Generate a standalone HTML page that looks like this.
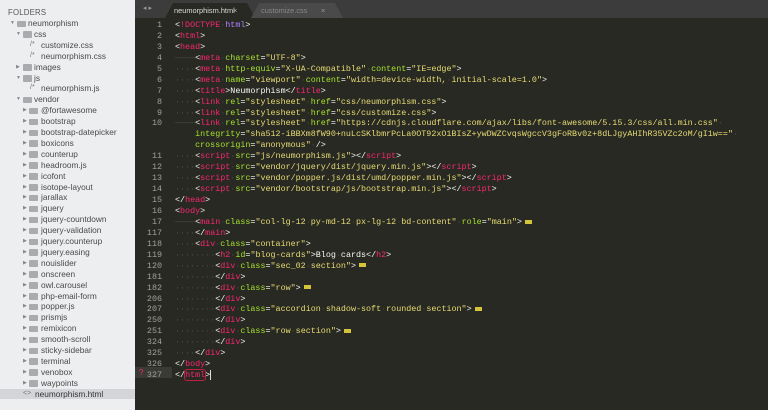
<!DOCTYPE html>
<html><head><style>
*{margin:0;padding:0;box-sizing:border-box}
body{width:768px;height:410px;overflow:hidden;background:#282923;position:relative;font-family:"Liberation Sans",sans-serif}
#side{position:absolute;left:0;top:0;width:135px;height:410px;background:#eceef0;color:#4a4a4a;font-size:8.3px}
#side .h{position:absolute;left:8px;top:8px;font-size:7.8px;color:#555;letter-spacing:.2px}
.r{position:absolute;height:10.9px;line-height:10.9px;white-space:nowrap;left:0;width:135px}
.r .a{position:absolute;font-size:5px;color:#888}
.r .f{position:absolute;top:2.5px;width:9px;height:6.5px;background:#a9abae;border-radius:1px}
.r .t{position:absolute}
.r .c{position:absolute;color:#777;font-size:7px}
#tabs{position:absolute;left:135px;top:0;width:633px;height:18px;background:#3c3c3c}
.tab{position:absolute;top:3px;height:15px;font-size:7.4px;line-height:15px}
#ed{position:absolute;left:135px;top:18px;width:633px;height:392px;background:#282923}
.ln{position:absolute;left:0;width:27px;text-align:right;color:#a0a19b;font-family:"Liberation Mono",monospace;font-size:8.4px;height:10.94px;line-height:10.94px}
.cl{position:absolute;left:40px;white-space:pre;font-family:"Liberation Mono",monospace;font-size:8.4px;height:10.94px;line-height:10.94px;color:#f8f8f2}
.g{color:#4d4e48}.p{color:#f92672}.v{color:#ae81ff}.at{color:#a6e22e}.s{color:#e6db74}
.fm{display:inline-block;width:7px;height:4px;background:#d4c43a;vertical-align:middle;margin-left:3px}
</style></head><body>
<div id="side">
<div class="h">FOLDERS</div>
<div class="r" style="top:18px"><span class="a" style="left:10px">▼</span><span class="f" style="left:17px"></span><span class="t" style="left:28px">neumorphism</span></div>
<div class="r" style="top:28.9px"><span class="a" style="left:16px">▼</span><span class="f" style="left:23px"></span><span class="t" style="left:34px">css</span></div>
<div class="r" style="top:39.8px"><span class="c" style="left:30px">/*</span><span class="t" style="left:41px">customize.css</span></div>
<div class="r" style="top:50.7px"><span class="c" style="left:30px">/*</span><span class="t" style="left:41px">neumorphism.css</span></div>
<div class="r" style="top:61.6px"><span class="a" style="left:16px">▶</span><span class="f" style="left:23px"></span><span class="t" style="left:34px">images</span></div>
<div class="r" style="top:72.5px"><span class="a" style="left:16px">▼</span><span class="f" style="left:23px"></span><span class="t" style="left:34px">js</span></div>
<div class="r" style="top:83.4px"><span class="c" style="left:30px">/*</span><span class="t" style="left:41px">neumorphism.js</span></div>
<div class="r" style="top:94.3px"><span class="a" style="left:16px">▼</span><span class="f" style="left:23px"></span><span class="t" style="left:34px">vendor</span></div>
<div class="r" style="top:105.2px"><span class="a" style="left:23px">▶</span><span class="f" style="left:29px"></span><span class="t" style="left:41px">@fortawesome</span></div>
<div class="r" style="top:116.1px"><span class="a" style="left:23px">▶</span><span class="f" style="left:29px"></span><span class="t" style="left:41px">bootstrap</span></div>
<div class="r" style="top:127px"><span class="a" style="left:23px">▶</span><span class="f" style="left:29px"></span><span class="t" style="left:41px">bootstrap-datepicker</span></div>
<div class="r" style="top:137.9px"><span class="a" style="left:23px">▶</span><span class="f" style="left:29px"></span><span class="t" style="left:41px">boxicons</span></div>
<div class="r" style="top:148.8px"><span class="a" style="left:23px">▶</span><span class="f" style="left:29px"></span><span class="t" style="left:41px">counterup</span></div>
<div class="r" style="top:159.7px"><span class="a" style="left:23px">▶</span><span class="f" style="left:29px"></span><span class="t" style="left:41px">headroom.js</span></div>
<div class="r" style="top:170.6px"><span class="a" style="left:23px">▶</span><span class="f" style="left:29px"></span><span class="t" style="left:41px">icofont</span></div>
<div class="r" style="top:181.5px"><span class="a" style="left:23px">▶</span><span class="f" style="left:29px"></span><span class="t" style="left:41px">isotope-layout</span></div>
<div class="r" style="top:192.4px"><span class="a" style="left:23px">▶</span><span class="f" style="left:29px"></span><span class="t" style="left:41px">jarallax</span></div>
<div class="r" style="top:203.3px"><span class="a" style="left:23px">▶</span><span class="f" style="left:29px"></span><span class="t" style="left:41px">jquery</span></div>
<div class="r" style="top:214.2px"><span class="a" style="left:23px">▶</span><span class="f" style="left:29px"></span><span class="t" style="left:41px">jquery-countdown</span></div>
<div class="r" style="top:225.1px"><span class="a" style="left:23px">▶</span><span class="f" style="left:29px"></span><span class="t" style="left:41px">jquery-validation</span></div>
<div class="r" style="top:236px"><span class="a" style="left:23px">▶</span><span class="f" style="left:29px"></span><span class="t" style="left:41px">jquery.counterup</span></div>
<div class="r" style="top:246.9px"><span class="a" style="left:23px">▶</span><span class="f" style="left:29px"></span><span class="t" style="left:41px">jquery.easing</span></div>
<div class="r" style="top:257.8px"><span class="a" style="left:23px">▶</span><span class="f" style="left:29px"></span><span class="t" style="left:41px">nouislider</span></div>
<div class="r" style="top:268.7px"><span class="a" style="left:23px">▶</span><span class="f" style="left:29px"></span><span class="t" style="left:41px">onscreen</span></div>
<div class="r" style="top:279.6px"><span class="a" style="left:23px">▶</span><span class="f" style="left:29px"></span><span class="t" style="left:41px">owl.carousel</span></div>
<div class="r" style="top:290.5px"><span class="a" style="left:23px">▶</span><span class="f" style="left:29px"></span><span class="t" style="left:41px">php-email-form</span></div>
<div class="r" style="top:301.4px"><span class="a" style="left:23px">▶</span><span class="f" style="left:29px"></span><span class="t" style="left:41px">popper.js</span></div>
<div class="r" style="top:312.3px"><span class="a" style="left:23px">▶</span><span class="f" style="left:29px"></span><span class="t" style="left:41px">prismjs</span></div>
<div class="r" style="top:323.2px"><span class="a" style="left:23px">▶</span><span class="f" style="left:29px"></span><span class="t" style="left:41px">remixicon</span></div>
<div class="r" style="top:334.1px"><span class="a" style="left:23px">▶</span><span class="f" style="left:29px"></span><span class="t" style="left:41px">smooth-scroll</span></div>
<div class="r" style="top:345px"><span class="a" style="left:23px">▶</span><span class="f" style="left:29px"></span><span class="t" style="left:41px">sticky-sidebar</span></div>
<div class="r" style="top:355.9px"><span class="a" style="left:23px">▶</span><span class="f" style="left:29px"></span><span class="t" style="left:41px">terminal</span></div>
<div class="r" style="top:366.8px"><span class="a" style="left:23px">▶</span><span class="f" style="left:29px"></span><span class="t" style="left:41px">venobox</span></div>
<div class="r" style="top:377.7px"><span class="a" style="left:23px">▶</span><span class="f" style="left:29px"></span><span class="t" style="left:41px">waypoints</span></div>
<div class="r" style="top:388.6px;background:#d3d5d9"><span class="c" style="left:23px">&lt;&gt;</span><span class="t" style="left:35px;color:#333">neumorphism.html</span></div>
</div>
<div id="tabs">
<span style="position:absolute;left:8px;top:4px;color:#999;font-size:7px">◂ ▸</span>
<div class="tab" style="left:30px;width:90px;background:#282923;color:#ddd;clip-path:polygon(8px 0,82px 0,90px 100%,0 100%)"><span style="position:absolute;left:9px">neumorphism.html</span><span style="position:absolute;left:68px;color:#aaa">×</span></div>
<div class="tab" style="left:116px;width:92px;background:#4a4a4a;color:#888;clip-path:polygon(8px 0,84px 0,92px 100%,0 100%)"><span style="position:absolute;left:10px">customize.css</span><span style="position:absolute;left:70px;color:#999">×</span></div>
</div>
<div id="ed">
<div style="position:absolute;left:0;top:349px;width:37px;height:11px;background:#3a3b35"></div>
<span style="position:absolute;left:4px;top:349px;color:#f92672;font-size:8px;line-height:11px">?</span>
<div id="code"></div>
</div>
<script>
const L=[
["1",'&lt;<span class="p">!DOCTYPE</span><span class="g">·</span><span class="v">html</span>&gt;'],
["2",'&lt;<span class="p">html</span>&gt;'],
["3",'&lt;<span class="p">head</span>&gt;'],
["4",'<span class="g">————</span>&lt;<span class="p">meta</span><span class="g">·</span><span class="at">charset</span>=<span class="s">"UTF-8"</span>&gt;'],
["5",'<span class="g">····</span>&lt;<span class="p">meta</span><span class="g">·</span><span class="at">http-equiv</span>=<span class="s">"X-UA-Compatible"</span><span class="g">·</span><span class="at">content</span>=<span class="s">"IE=edge"</span>&gt;'],
["6",'<span class="g">····</span>&lt;<span class="p">meta</span><span class="g">·</span><span class="at">name</span>=<span class="s">"viewport"</span><span class="g">·</span><span class="at">content</span>=<span class="s">"width=device-width,<span class="g">·</span>initial-scale=1.0"</span>&gt;'],
["7",'<span class="g">····</span>&lt;<span class="p">title</span>&gt;Neumorphism&lt;/<span class="p">title</span>&gt;'],
["8",'<span class="g">····</span>&lt;<span class="p">link</span><span class="g">·</span><span class="at">rel</span>=<span class="s">"stylesheet"</span><span class="g">·</span><span class="at">href</span>=<span class="s">"css/neumorphism.css"</span>&gt;'],
["9",'<span class="g">····</span>&lt;<span class="p">link</span><span class="g">·</span><span class="at">rel</span>=<span class="s">"stylesheet"</span><span class="g">·</span><span class="at">href</span>=<span class="s">"css/customize.css"</span>&gt;'],
["10",'<span class="g">————</span>&lt;<span class="p">link</span><span class="g">·</span><span class="at">rel</span>=<span class="s">"stylesheet"</span><span class="g">·</span><span class="at">href</span>=<span class="s">"https://cdnjs.cloudflare.com/ajax/libs/font-awesome/5.15.3/css/all.min.css"</span><span class="g">·</span>'],
["",'<span class="g">    </span><span class="at">integrity</span>=<span class="s">"sha512-iBBXm8fW90+nuLcSKlbmrPcLa0OT92xO1BIsZ+ywDWZCvqsWgccV3gFoRBv0z+8dLJgyAHIhR35VZc2oM/gI1w=="</span><span class="g">·</span>'],
["",'<span class="g">    </span><span class="at">crossorigin</span>=<span class="s">"anonymous"</span><span class="g">·</span>/&gt;'],
["11",'<span class="g">····</span>&lt;<span class="p">script</span><span class="g">·</span><span class="at">src</span>=<span class="s">"js/neumorphism.js"</span>&gt;&lt;/<span class="p">script</span>&gt;'],
["12",'<span class="g">····</span>&lt;<span class="p">script</span><span class="g">·</span><span class="at">src</span>=<span class="s">"vendor/jquery/dist/jquery.min.js"</span>&gt;&lt;/<span class="p">script</span>&gt;'],
["13",'<span class="g">····</span>&lt;<span class="p">script</span><span class="g">·</span><span class="at">src</span>=<span class="s">"vendor/popper.js/dist/umd/popper.min.js"</span>&gt;&lt;/<span class="p">script</span>&gt;'],
["14",'<span class="g">····</span>&lt;<span class="p">script</span><span class="g">·</span><span class="at">src</span>=<span class="s">"vendor/bootstrap/js/bootstrap.min.js"</span>&gt;&lt;/<span class="p">script</span>&gt;'],
["15",'&lt;/<span class="p">head</span>&gt;'],
["16",'&lt;<span class="p">body</span>&gt;'],
["17",'<span class="g">————</span>&lt;<span class="p">main</span><span class="g">·</span><span class="at">class</span>=<span class="s">"col-lg-12<span class="g">·</span>py-md-12<span class="g">·</span>px-lg-12<span class="g">·</span>bd-content"</span><span class="g">·</span><span class="at">role</span>=<span class="s">"main"</span>&gt;<span class="fm"></span>'],
["117",'<span class="g">····</span>&lt;/<span class="p">main</span>&gt;'],
["118",'<span class="g">····</span>&lt;<span class="p">div</span><span class="g">·</span><span class="at">class</span>=<span class="s">"container"</span>&gt;'],
["119",'<span class="g">········</span>&lt;<span class="p">h2</span><span class="g">·</span><span class="at">id</span>=<span class="s">"blog-cards"</span>&gt;Blog<span class="g">·</span>cards&lt;/<span class="p">h2</span>&gt;'],
["120",'<span class="g">········</span>&lt;<span class="p">div</span><span class="g">·</span><span class="at">class</span>=<span class="s">"sec_02<span class="g">·</span>section"</span>&gt;<span class="fm"></span>'],
["181",'<span class="g">········</span>&lt;/<span class="p">div</span>&gt;'],
["182",'<span class="g">········</span>&lt;<span class="p">div</span><span class="g">·</span><span class="at">class</span>=<span class="s">"row"</span>&gt;<span class="fm"></span>'],
["206",'<span class="g">········</span>&lt;/<span class="p">div</span>&gt;'],
["207",'<span class="g">········</span>&lt;<span class="p">div</span><span class="g">·</span><span class="at">class</span>=<span class="s">"accordion<span class="g">·</span>shadow-soft<span class="g">·</span>rounded<span class="g">·</span>section"</span>&gt;<span class="fm"></span>'],
["250",'<span class="g">········</span>&lt;/<span class="p">div</span>&gt;'],
["251",'<span class="g">········</span>&lt;<span class="p">div</span><span class="g">·</span><span class="at">class</span>=<span class="s">"row<span class="g">·</span>section"</span>&gt;<span class="fm"></span>'],
["324",'<span class="g">········</span>&lt;/<span class="p">div</span>&gt;'],
["325",'<span class="g">····</span>&lt;/<span class="p">div</span>&gt;'],
["326",'&lt;/<span class="p">body</span>&gt;'],
["327",'&lt;/<span class="p" style="outline:1px solid #c02040;border-radius:2px">html</span>&gt;<span style="border-left:1px solid #ddd"></span>']
];
let h='';L.forEach((l,i)=>{const t=2+i*10.94;h+=`<div class="ln" style="top:${t}px">${l[0]}</div><div class="cl" style="top:${t}px">${l[1]}</div>`});
document.getElementById('code').innerHTML=h;
</script>
</body></html>
